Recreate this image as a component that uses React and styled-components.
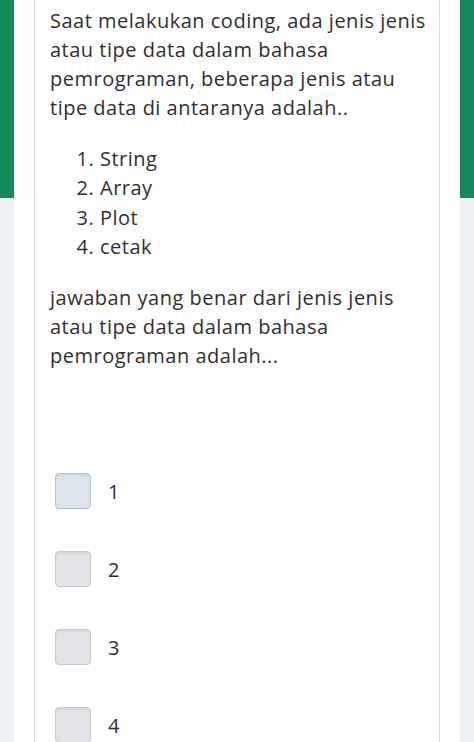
import React from 'react'
import styled, { createGlobalStyle } from 'styled-components';

const GlobalStyle = createGlobalStyle`
    html, body {
        margin: 0;
        padding: 0;
        background: #eceff4;
    }
    body {
        font-family: "Open Sans", "Noto Sans", sans-serif;
        color: #2b2b2b;
    }
`

const Page = styled.div`
    position: relative;
    width: 474px;
    height: 742px;
    overflow: hidden;
    background: linear-gradient(to bottom, #15895b 0, #15895b 198px, #eceff4 198px);
`

const Sheet = styled.div`
    margin: 0 14px;
    height: 742px;
    background: #ffffff;
    padding: 0 20px;
    box-sizing: border-box;
`

const Card = styled.div`
    height: 100%;
    border-left: 1px solid #dcdcdc;
    border-right: 1px solid #dcdcdc;
    padding: 6px 3px 0 15px;
    box-sizing: border-box;
`

const Paragraph = styled.p`
    margin: 0;
    font-size: 20px;
    line-height: 29px;
    letter-spacing: 0.5px;
    color: #2f2f2f;
`

const List = styled.ol`
    margin: 22px 0 22px 0;
    padding-left: 50px;
    font-size: 20px;
    line-height: 29.3px;
    letter-spacing: 0.5px;
    color: #2f2f2f;
    li {
        padding-left: 0;
    }
`

const Options = styled.div`
    margin-top: 103px;
    display: flex;
    flex-direction: column;
    gap: 42px;
    padding-left: 5px;
`

const Option = styled.label`
    display: flex;
    align-items: center;
    gap: 17px;
    font-size: 20px;
    color: #2f2f2f;
`

const Box = styled.span`
    display: block;
    width: 34px;
    height: 34px;
    border-radius: 4px;
    border: 1px solid ${props => props.active ? '#b3c4d6' : '#c6c9ce'};
    background: ${props => props.active ? '#dde4ec' : '#e1e3e7'};
    box-shadow: inset 0 2px 2px rgba(0, 0, 0, 0.06);
`

const App = () => {
    const items = ['String', 'Array', 'Plot', 'cetak'];
    const answers = ['1', '2', '3', '4'];

    return (
        <Page>
            <GlobalStyle />
            <Sheet>
                <Card>
                    <Paragraph>
                        Saat melakukan coding, ada jenis jenis atau tipe data dalam bahasa pemrograman, beberapa jenis atau tipe data di antaranya adalah..
                    </Paragraph>
                    <List>
                        {items.map((item) => <li key={item}>{item}</li>)}
                    </List>
                    <Paragraph>
                        jawaban yang benar dari jenis jenis atau tipe data dalam bahasa pemrograman adalah...
                    </Paragraph>
                    <Options>
                        {answers.map((answer, index) => (
                            <Option key={answer}>
                                <Box active={index === 0} />
                                {answer}
                            </Option>
                        ))}
                    </Options>
                </Card>
            </Sheet>
        </Page>
    );
}

export default App
